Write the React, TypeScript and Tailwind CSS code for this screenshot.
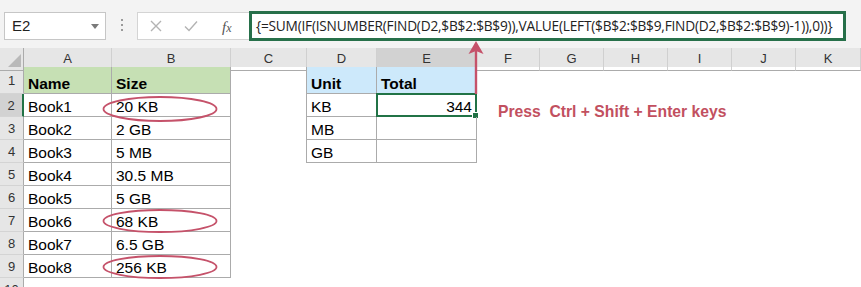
import React from "react";

const GRID =
  "grid grid-cols-[24px_88px_119px_76px_70px_100px_63px_64px_64px_64px_64px_1fr]";

const LETTERS = ["A", "B", "C", "D", "E", "F", "G", "H", "I", "J", "K"];

const FORMULA =
  "{=SUM(IF(ISNUMBER(FIND(D2,$B$2:$B$9)),VALUE(LEFT($B$2:$B$9,FIND(D2,$B$2:$B$9)-1)),0))}";

const books = [
  { name: "Book1", size: "20 KB", mark: true },
  { name: "Book2", size: "2 GB" },
  { name: "Book3", size: "5 MB" },
  { name: "Book4", size: "30.5 MB" },
  { name: "Book5", size: "5 GB" },
  { name: "Book6", size: "68 KB", mark: true },
  { name: "Book7", size: "6.5 GB" },
  { name: "Book8", size: "256 KB", mark: true },
];

const units: Record<number, { unit: string; total: string }> = {
  2: { unit: "KB", total: "344" },
  3: { unit: "MB", total: "" },
  4: { unit: "GB", total: "" },
};

const cellText = "flex items-end pl-[4px] pb-0 leading-[18px] whitespace-nowrap text-[15.5px] text-black";

function Ellipse({ first }: { first?: boolean }) {
  // red circle drawn around the KB sizes
  return (
    <svg
      className={`pointer-events-none absolute left-[-10px] ${first ? "top-[2px] h-[26px]" : "top-[0px] h-[24px]"} w-[116px] overflow-visible`}
      viewBox="0 0 116 24"
      preserveAspectRatio="none"
    >
      <ellipse cx="58" cy="12" rx="56.5" ry="11" fill="none" stroke="#c5526a" strokeWidth="1.8" />
    </svg>
  );
}

function TopBar() {
  return (
    <div className="relative h-[48px] bg-[#f3f3f3]">
      {/* Name box */}
      <div className="absolute left-[4px] top-[12px] flex h-[28px] w-[102px] items-center border border-[#c6c6c6] bg-white pl-[7px] text-[15px] text-[#222]">
        E2
        <span className="absolute right-[6px] top-[11px] h-0 w-0 border-x-[4px] border-t-[5px] border-x-transparent border-t-[#7a7a7a]" />
      </div>
      {/* grip dots */}
      <div className="absolute left-[121px] top-[19px] flex flex-col gap-[3px]">
        <span className="h-[2px] w-[2px] bg-[#9a9a9a]" />
        <span className="h-[2px] w-[2px] bg-[#9a9a9a]" />
        <span className="h-[2px] w-[2px] bg-[#9a9a9a]" />
      </div>
      {/* cancel / enter / fx */}
      <div className="absolute left-[137px] top-[12px] flex h-[28px] w-[112px] items-center border-y border-l border-[#d4d4d4] bg-white">
        <svg className="absolute left-[12px] top-[7px]" width="12" height="12" viewBox="0 0 12 12">
          <path d="M1 1 L11 11 M11 1 L1 11" stroke="#b3b3b3" strokeWidth="1.4" fill="none" />
        </svg>
        <svg className="absolute left-[46px] top-[7px]" width="14" height="12" viewBox="0 0 14 12">
          <path d="M1 6.5 L5 10.5 L13 1.5" stroke="#b3b3b3" strokeWidth="1.4" fill="none" />
        </svg>
        <span className="absolute left-[84px] top-[3px] font-['Liberation_Serif',serif] text-[15px] italic text-[#555]">
          f<span className="text-[12px]">x</span>
        </span>
      </div>
      {/* formula input, framed in green */}
      <div className="absolute left-[249px] top-[11px] flex h-[30px] w-[597px] items-center overflow-hidden border-[3px] border-[#27704a] bg-white pl-[4px] font-['Open_Sans',sans-serif] text-[13.7px] tracking-[-0.22px] text-[#222] whitespace-nowrap">
        {FORMULA}
      </div>
    </div>
  );
}

function HeaderRow() {
  return (
    <div className={`${GRID} h-[19px] bg-[#e6e6e6]`}>
      <div className="relative border-r border-b border-[#ababab]">
        <svg className="absolute right-[2px] bottom-[3px]" width="13" height="13" viewBox="0 0 13 13">
          <path d="M13 0 L13 13 L0 13 Z" fill="#b9b9b9" />
        </svg>
      </div>
      {LETTERS.map((l) =>
        l === "E" ? (
          <div
            key={l}
            className="flex items-center justify-center border-r border-r-[#d0d0d0] border-b-2 border-b-[#217346] bg-[#d2d2d2] pt-[1px] text-[13px] text-[#333]"
          >
            {l}
          </div>
        ) : (
          <div
            key={l}
            className="flex items-center justify-center border-r border-b border-r-[#d0d0d0] border-b-[#ababab] text-[13px] text-[#333]"
          >
            {l}
          </div>
        )
      )}
      <div className="border-b border-[#ababab]" />
    </div>
  );
}

function RowHead({ n, active }: { n: number; active?: boolean }) {
  return (
    <div
      className={`flex items-center justify-center border-b border-b-[#d4d4d4] pt-[2px] text-[13px] text-[#333] ${
        active ? "border-r-2 border-r-[#217346] bg-[#d2d2d2]" : "border-r border-r-[#ababab] bg-[#e6e6e6]"
      }`}
    >
      {n}
    </div>
  );
}

function Row({ n }: { n: number }) {
  const h = n === 1 ? "h-[27px]" : "h-[23px]";
  const book = books[n - 2];
  const u = units[n];
  const tbl = "border-r border-b border-[#ababab]";

  let a: React.ReactNode = null;
  let b: React.ReactNode = null;
  if (n === 1) {
    a = <div className={`${tbl} ${cellText} bg-[#c6e0b4] font-bold`}>Name</div>;
    b = <div className={`${tbl} ${cellText} bg-[#c6e0b4] font-bold`}>Size</div>;
  } else if (book) {
    a = <div className={`${tbl} ${cellText}`}>{book.name}</div>;
    b = (
      <div className={`relative ${tbl} ${cellText}`}>
        {book.size}
        {book.mark && <Ellipse first={n === 2} />}
      </div>
    );
  } else {
    a = <div />;
    b = <div />;
  }

  const c: React.ReactNode = <div className={n <= 4 ? "border-r border-[#ababab]" : ""} />;
  let d: React.ReactNode = <div />;
  let e: React.ReactNode = <div />;
  let f: React.ReactNode = <div />;
  if (n === 1) {
    d = <div className={`${tbl} ${cellText} bg-[#cde9fb] font-bold`}>Unit</div>;
    e = <div className={`${tbl} ${cellText} bg-[#cde9fb] font-bold`}>Total</div>;
  } else if (u) {
    d = <div className={`${tbl} ${cellText}`}>{u.unit}</div>;
    e = (
      <div className={`relative ${tbl} ${cellText} justify-end pr-[4px]`}>
        {u.total}
        {n === 2 && (
          <>
            <span className="pointer-events-none absolute left-[-1px] top-[-1px] h-[24px] w-[101px] border-2 border-[#217346]" />
            <span className="absolute right-[-3px] bottom-[-3px] box-content h-[5px] w-[5px] border border-white bg-[#217346]" />
          </>
        )}
      </div>
    );
  }
  if (n === 2) {
    f = (
      <div className="relative">
        <span className="absolute left-[21px] top-[6px] whitespace-nowrap text-[15.7px] font-bold text-[#c2505f]">
          Press&nbsp; Ctrl + Shift + Enter keys
        </span>
      </div>
    );
  }

  return (
    <div className={`${GRID} ${h}`}>
      <RowHead n={n} active={n === 2} />
      {a}
      {b}
      {c}
      {d}
      {e}
      {f}
      <div />
      <div />
      <div />
      <div />
      <div />
    </div>
  );
}

export default function App() {
  return (
    <div className="relative h-[287px] w-[861px] overflow-hidden bg-white font-['Liberation_Sans',Arial,sans-serif]">
      <TopBar />
      <HeaderRow />
      {[1, 2, 3, 4, 5, 6, 7, 8, 9, 10].map((n) => (
        <Row key={n} n={n} />
      ))}
      {/* red arrow pointing at the formula */}
      <svg className="pointer-events-none absolute left-[468px] top-[41px]" width="16" height="54" viewBox="0 0 16 54">
        <line x1="8" y1="8" x2="8" y2="53" stroke="#c5526a" strokeWidth="2.4" />
        <path d="M8 0 L15.5 13 L8 10 L0.5 13 Z" fill="#c5526a" />
      </svg>
    </div>
  );
}
